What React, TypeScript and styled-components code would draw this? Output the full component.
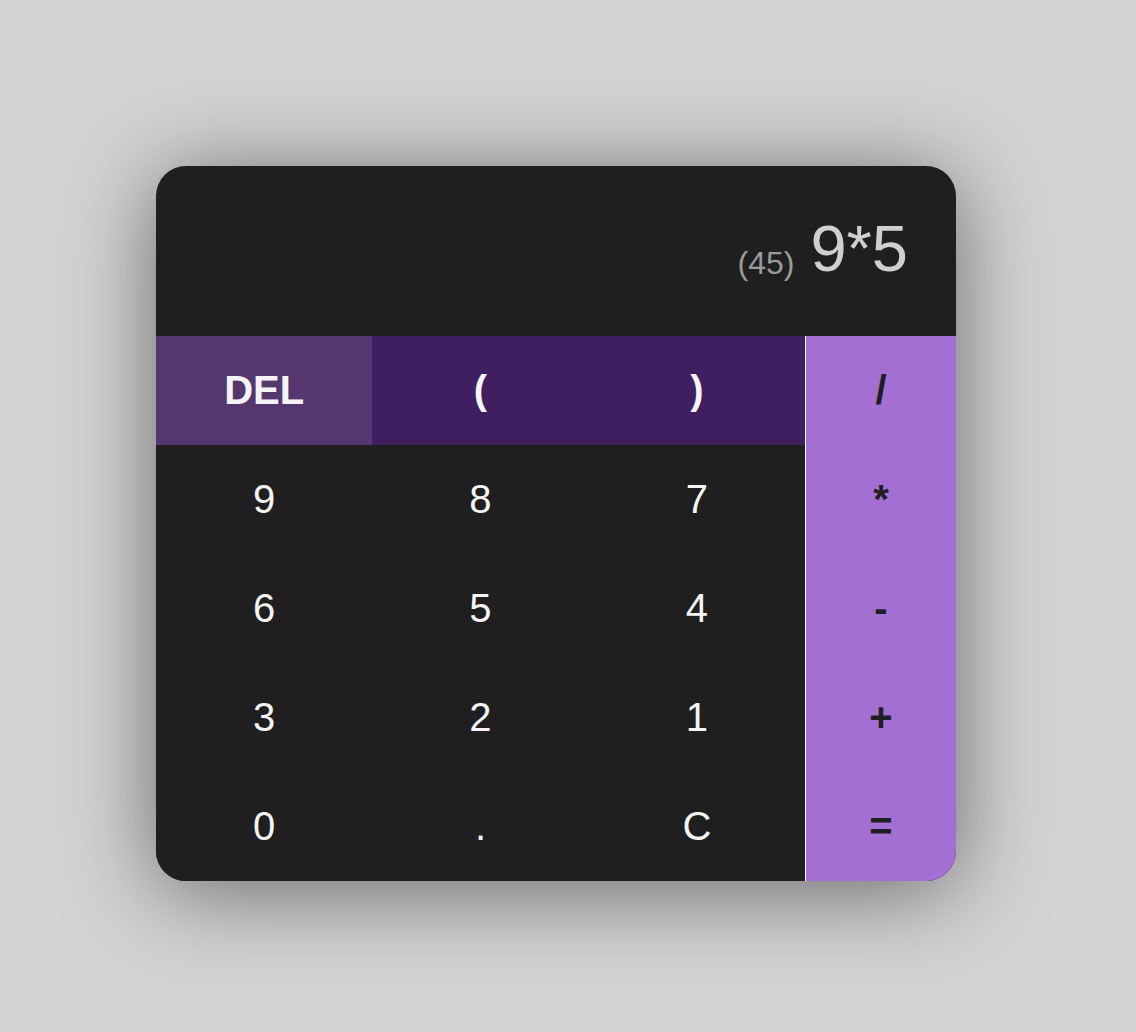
import React, { useState } from 'react';
import styled, { createGlobalStyle } from 'styled-components';

const GlobalStyle = createGlobalStyle`
  html, body {
    margin: 0;
    padding: 0;
    background: #d3d3d3;
    font-family: "Liberation Sans", Arial, sans-serif;
  }
`;

const Page = styled.div`
  min-height: 100vh;
  box-sizing: border-box;
  padding: 166px 0 0 156px;
`;

const Card = styled.div`
  width: 800px;
  border-radius: 30px;
  overflow: hidden;
  background: #1f1f1f;
  box-shadow: 0 10px 90px rgba(0, 0, 0, 0.5);
`;

const Display = styled.div`
  height: 170px;
  box-sizing: border-box;
  padding: 0 48px 59px 0;
  display: flex;
  justify-content: flex-end;
  align-items: flex-end;
  gap: 16px;
`;

const Preview = styled.span`
  font-size: 32px;
  color: #9a9a9a;
  line-height: 1;
  margin-bottom: -2px;
`;

const Expression = styled.span`
  font-size: 65px;
  color: #cfcfcf;
  line-height: 1;
  margin-bottom: -4px;
`;

const Keypad = styled.div`
  display: grid;
  grid-template-columns: repeat(3, 1fr) 151px;
  grid-auto-rows: 109px;
`;

type Kind = 'digit' | 'del' | 'paren' | 'op';

const bg: Record<Kind, string> = {
  digit: '#1f1f1f',
  del: '#54376f',
  paren: '#3f1f5f',
  op: '#a36fd2',
};

const Key = styled.button<{ $kind: Kind }>`
  border: none;
  margin: 0;
  padding: 0;
  font-family: inherit;
  font-size: 40px;
  font-weight: ${(p) => (p.$kind === 'digit' ? 400 : 700)};
  color: ${(p) => (p.$kind === 'op' ? '#1f1f1f' : '#f4f4f4')};
  background: ${(p) => bg[p.$kind]};
  border-left: ${(p) => (p.$kind === 'op' ? '1px solid #ffffff' : 'none')};
  display: flex;
  align-items: center;
  justify-content: center;
  cursor: pointer;
`;

const rows: { label: string; kind: Kind }[][] = [
  [
    { label: 'DEL', kind: 'del' },
    { label: '(', kind: 'paren' },
    { label: ')', kind: 'paren' },
    { label: '/', kind: 'op' },
  ],
  [
    { label: '9', kind: 'digit' },
    { label: '8', kind: 'digit' },
    { label: '7', kind: 'digit' },
    { label: '*', kind: 'op' },
  ],
  [
    { label: '6', kind: 'digit' },
    { label: '5', kind: 'digit' },
    { label: '4', kind: 'digit' },
    { label: '-', kind: 'op' },
  ],
  [
    { label: '3', kind: 'digit' },
    { label: '2', kind: 'digit' },
    { label: '1', kind: 'digit' },
    { label: '+', kind: 'op' },
  ],
  [
    { label: '0', kind: 'digit' },
    { label: '.', kind: 'digit' },
    { label: 'C', kind: 'digit' },
    { label: '=', kind: 'op' },
  ],
];

const App = () => {
  const [expr, setExpr] = useState('9*5');

  let preview = '';
  try {
    // eslint-disable-next-line no-new-func
    const v = Function(`return (${expr})`)();
    preview = typeof v === 'number' && isFinite(v) ? String(v) : '';
  } catch {
    preview = '';
  }

  const press = (label: string) => {
    if (label === 'C') setExpr('');
    else if (label === 'DEL') setExpr((e) => e.slice(0, -1));
    else if (label === '=') setExpr(preview);
    else setExpr((e) => e + label);
  };

  return (
    <Page>
      <GlobalStyle />
      <Card>
        <Display>
          {preview && <Preview>({preview})</Preview>}
          <Expression>{expr}</Expression>
        </Display>
        <Keypad>
          {rows.flat().map((k) => (
            <Key key={k.label} $kind={k.kind} onClick={() => press(k.label)}>
              {k.label}
            </Key>
          ))}
        </Keypad>
      </Card>
    </Page>
  );
};

export default App;
